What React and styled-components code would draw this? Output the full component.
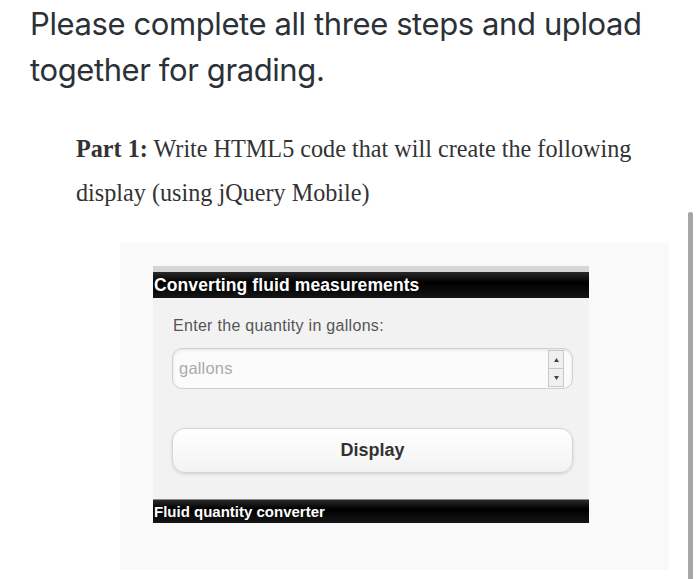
import React from "react";
import styled, { createGlobalStyle } from "styled-components";

const Global = createGlobalStyle`
  html, body { margin: 0; padding: 0; background: #ffffff; }
  body { width: 700px; height: 579px; overflow: hidden; position: relative; }
`;

const Page = styled.div`
  position: relative;
  width: 700px;
  height: 579px;
  overflow: hidden;
`;

const Heading = styled.h1`
  margin: 0;
  padding: 1px 30px 0 30px;
  font-family: Inter, "Liberation Sans", sans-serif;
  font-weight: 400;
  font-size: 31px;
  line-height: 46px;
  color: #2b3137;
  letter-spacing: -0.4px;
`;

const Part = styled.p`
  margin: 0;
  padding: 34px 50px 0 76px;
  font-family: "Liberation Serif", serif;
  font-size: 24.2px;
  line-height: 44px;
  color: #333;
`;

const Panel = styled.div`
  margin: 28px 0 0 120px;
  width: 549px;
  height: 327px;
  background: #f9f9f9;
  padding: 23px 0 0 33px;
  box-sizing: border-box;
`;

const Mobile = styled.div`
  width: 436px;
  display: flex;
  flex-direction: column;
`;

const Bar = styled.div`
  background: linear-gradient(#2a2a2a, #000 40%, #151515);
  color: #fff;
  font-family: "Liberation Sans", Arial, sans-serif;
  font-weight: 700;
  font-size: ${(p) => p.$size}px;
  height: ${(p) => p.$h}px;
  line-height: ${(p) => p.$h}px;
  padding-left: 1px;
  letter-spacing: ${(p) => p.$ls}px;
  white-space: nowrap;
  border-top: ${(p) => (p.$top ? "6px solid #d6d6d6" : "1px solid #888")};
`;

const Content = styled.div`
  background: #f2f2f2;
  height: 201px;
  padding: 19px 16px 0 19px;
  box-sizing: border-box;
  display: flex;
  flex-direction: column;
`;

const Label = styled.div`
  font-family: "Liberation Sans", Arial, sans-serif;
  font-size: 16px;
  line-height: 18px;
  color: #555;
  letter-spacing: 0.3px;
  margin-left: 1px;
`;

const InputBox = styled.div`
  margin-top: 13px;
  height: 41px;
  box-sizing: border-box;
  border: 1.5px solid #cfcfcf;
  border-radius: 10px;
  background: #fbfbfb;
  box-shadow: inset 0 1px 3px rgba(0,0,0,0.1);
  display: flex;
  align-items: center;
  padding: 0 8px 0 6px;
`;

const Placeholder = styled.span`
  flex: 1;
  font-family: "Liberation Sans", Arial, sans-serif;
  font-size: 16.5px;
  color: #aaa;
  letter-spacing: 0.2px;
`;

const Spinner = styled.div`
  width: 16px;
  height: 37px;
  border: 1px solid #c8c8c8;
  box-sizing: border-box;
  display: flex;
  flex-direction: column;
  background: #f0f0f0;
`;

const SpinHalf = styled.div`
  flex: 1;
  display: flex;
  align-items: center;
  justify-content: center;
  border-top: ${(p) => (p.$bottom ? "1px solid #c8c8c8" : "none")};
`;

const Button = styled.div`
  margin-top: 39px;
  height: 45px;
  box-sizing: border-box;
  border: 1.5px solid #d6d6d6;
  border-radius: 13px;
  background: linear-gradient(#ffffff, #f3f3f3);
  box-shadow: 0 1px 3px rgba(0,0,0,0.15);
  display: flex;
  align-items: center;
  justify-content: center;
  font-family: "Liberation Sans", Arial, sans-serif;
  font-weight: 700;
  font-size: 18px;
  color: #333;
  letter-spacing: 0px;
`;

const Scrollbar = styled.div`
  position: absolute;
  left: 688px;
  top: 212px;
  width: 5px;
  height: 380px;
  border-radius: 2px;
  background: #a6a6a6;
`;

const Tri = ({ down }) => (
  <svg width="5" height="4" viewBox="0 0 5 4">
    <path d={down ? "M0 0 L5 0 L2.5 4 Z" : "M0 4 L5 4 L2.5 0 Z"} fill="#444" />
  </svg>
);

export default function App() {
  return (
    <Page>
      <Global />
      <Heading>Please complete all three steps and upload together for grading.</Heading>
      <Part>
        <b>Part 1:</b> Write HTML5 code that will create the following display (using jQuery Mobile)
      </Part>
      <Panel>
        <Mobile>
          <Bar $top $size={17.5} $h={26} $ls={0.1}>Converting fluid measurements</Bar>
          <Content>
            <Label>Enter the quantity in gallons:</Label>
            <InputBox>
              <Placeholder>gallons</Placeholder>
              <Spinner>
                <SpinHalf><Tri /></SpinHalf>
                <SpinHalf $bottom><Tri down /></SpinHalf>
              </Spinner>
            </InputBox>
            <Button>Display</Button>
          </Content>
          <Bar $size={15} $h={23} $ls={0}>Fluid quantity converter</Bar>
        </Mobile>
      </Panel>
      <Scrollbar />
    </Page>
  );
}
